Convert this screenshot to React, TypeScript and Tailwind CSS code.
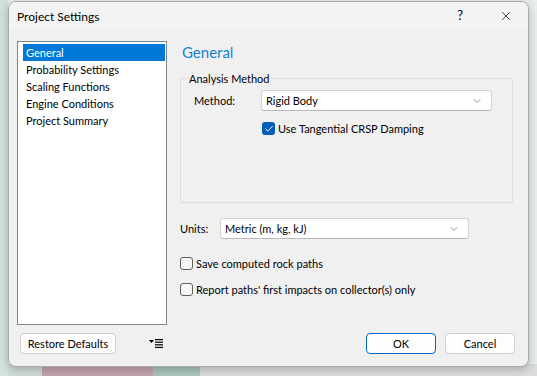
import { ChevronDown, Check, X } from 'lucide-react';

const items = [
  'General',
  'Probability Settings',
  'Scaling Functions',
  'Engine Conditions',
  'Project Summary',
];

function Select({ value, className }: { value: string; className: string }) {
  return (
    <div
      className={`flex h-[21px] items-center justify-between rounded-[3px] border border-[#d4d4d4] border-b-[#b8b8b8] bg-white pl-[4px] pr-[8px] ${className}`}
    >
      <span>{value}</span>
      <ChevronDown size={12} strokeWidth={1.3} className="text-[#5e5e5e]" />
    </div>
  );
}

function CheckBox({ checked, label }: { checked?: boolean; label: string }) {
  return (
    <div className="flex items-center gap-[3px]">
      {checked ? (
        <span className="flex h-[13px] w-[13px] items-center justify-center rounded-[3px] bg-[#005fb8]">
          <Check size={10} strokeWidth={2.4} className="text-white" />
        </span>
      ) : (
        <span className="h-[13px] w-[13px] rounded-[3px] border border-[#5f5f5f] bg-[#f6f6f6]"></span>
      )}
      <span>{label}</span>
    </div>
  );
}

export default function App() {
  return (
    <div className="relative h-[376px] w-[537px] overflow-hidden bg-[#e9efec] font-['Lato',sans-serif] text-[11px] leading-[17px] text-black">
      {/* desktop behind the window */}
      <div className="absolute bottom-0 left-0 h-[12px] w-[537px] bg-[#dcdcdc]"></div>
      <div className="absolute bottom-0 left-0 h-[12px] w-[42px] bg-[#cfdcd5]"></div>
      <div className="absolute bottom-0 left-[42px] h-[12px] w-[111px] bg-[#c4a4b1]"></div>
      <div className="absolute bottom-0 left-[153px] h-[12px] w-[47px] bg-[#aac6ba]"></div>
      <div className="absolute left-0 top-0 h-[376px] w-[8px] bg-[#d2e3db]"></div>

      <div className="relative ml-[8px] mt-[1px] flex h-[366px] w-[521px] flex-col overflow-hidden rounded-[8px] border border-[#a9a9a9] bg-[#f0f0f0] shadow-[0_2px_10px_rgba(0,0,0,0.25)]">
        {/* title bar */}
        <div className="flex h-[29px] items-center justify-between bg-[#f3f3f3] pl-[8px] pr-[15px]">
          <span className="pt-[1px] text-[12px]">Project Settings</span>
          <div className="flex items-center gap-[36px]">
            <span className="text-[13px]">?</span>
            <X size={14} strokeWidth={1.2} />
          </div>
        </div>

        <div className="flex flex-1 pt-[12px] pl-[8px] pr-[13px] pb-[12px]">
          {/* left column */}
          <div className="flex w-[150px] flex-col">
            <div className="h-[284px] border border-[#80858c] bg-white p-[1px] pl-[5px] pt-[2px]">
              {items.map((item, i) => (
                <div
                  key={item}
                  className={`h-[17px] pl-[3px] ${i === 0 ? 'bg-[#0078d7] text-white' : ''}`}
                >
                  {item}
                </div>
              ))}
            </div>
            <div className="mt-[8px] flex items-center pl-[3px]">
              <button className="h-[21px] w-[96px] rounded-[4px] border border-[#d0d0d0] bg-[#fdfdfd]">
                Restore Defaults
              </button>
              <svg width="14" height="9" viewBox="0 0 14 9" className="ml-[33px]">
                <path d="M0 1h5L2.5 4z" fill="#000" />
                <rect x="6" y="0" width="8" height="1.2" fill="#000" />
                <rect x="6" y="2.6" width="8" height="1.2" fill="#000" />
                <rect x="6" y="5.2" width="8" height="1.2" fill="#000" />
                <rect x="6" y="7.8" width="8" height="1.2" fill="#000" />
              </svg>
            </div>
          </div>

          {/* right column */}
          <div className="ml-[13px] flex flex-1 flex-col">
            <div className="flex-1">
              <div className="pl-[2px] pt-[1px] text-[15px] leading-[20px] text-[#1384d6]">General</div>

              <div className="relative mt-[16px] h-[125px] w-[333px] rounded-[2px] border border-[#dcdcdc] pl-[13px] pt-[11px]">
                <span className="absolute -top-[9px] left-[6px] bg-[#f0f0f0] px-[2px]">Analysis Method</span>
                <div className="flex items-center">
                  <span className="w-[67px]">Method:</span>
                  <Select value="Rigid Body" className="w-[231px]" />
                </div>
                <div className="ml-[68px] mt-[9px]">
                  <CheckBox checked label="Use Tangential CRSP Damping" />
                </div>
              </div>

              <div className="mt-[15px] flex items-center">
                <span className="w-[40px]">Units:</span>
                <Select value="Metric (m, kg, kJ)" className="w-[249px]" />
              </div>

              <div className="mt-[16px] flex flex-col gap-[9px]">
                <CheckBox label="Save computed rock paths" />
                <CheckBox label="Report paths' first impacts on collector(s) only" />
              </div>
            </div>

            <div className="flex justify-end gap-[9px] pr-[0px]">
              <button className="h-[21px] w-[70px] rounded-[4px] border border-[#0067c0] bg-[#fdfdfd]">
                OK
              </button>
              <button className="h-[21px] w-[70px] rounded-[4px] border border-[#d0d0d0] bg-[#fdfdfd]">
                Cancel
              </button>
            </div>
          </div>
        </div>
      </div>
    </div>
  );
}
